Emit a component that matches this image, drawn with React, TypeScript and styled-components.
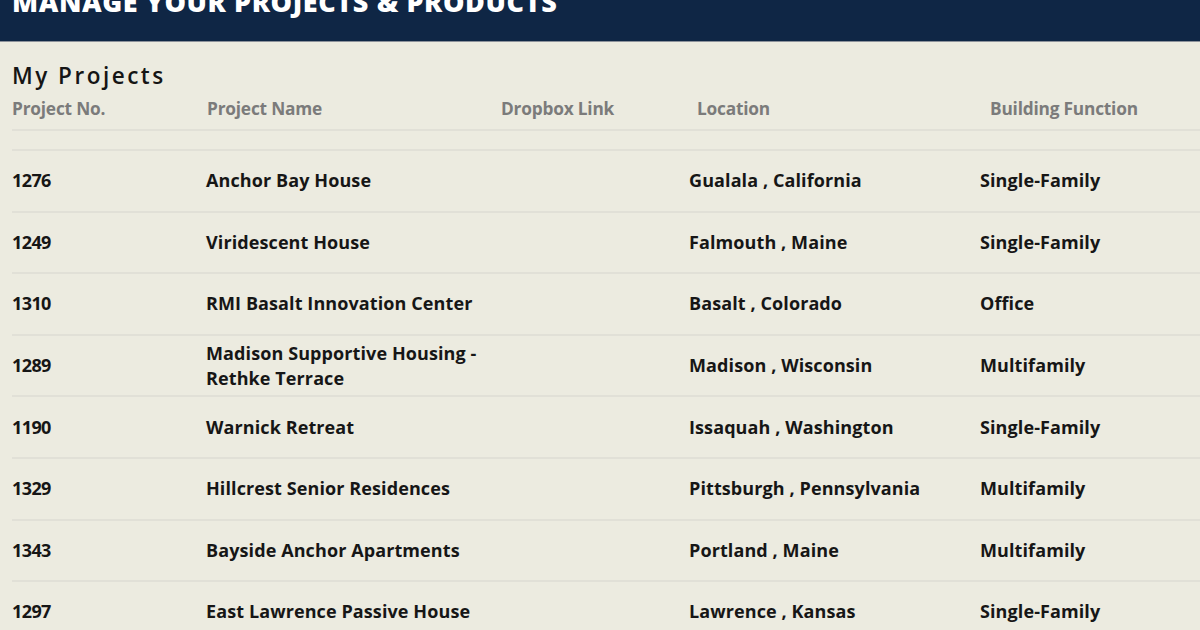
import React from "react";
import styled, { createGlobalStyle } from "styled-components";

const Global = createGlobalStyle`
  html, body { margin: 0; padding: 0; background: #ecebe0; }
  body { font-family: "Open Sans", Lato, sans-serif; overflow: hidden; }
`;

const TopBar = styled.header`
  height: 41px;
  background: #0f2645;
  border-bottom: 1px solid #8d929b;
  overflow: hidden;
  padding-left: 12px;
`;

const TopTitle = styled.h1`
  margin: -12px 0 0;
  font-family: "Open Sans", sans-serif;
  font-weight: 800;
  font-size: 27px;
  line-height: 28px;
  letter-spacing: 0.6px;
  color: #ffffff;
  white-space: nowrap;
`;

const Content = styled.main`
  padding-left: 12px;
`;

const SectionTitle = styled.h2`
  margin: 0;
  padding-top: 20px;
  font-family: "Open Sans", sans-serif;
  font-weight: 600;
  font-size: 22.5px;
  line-height: 28px;
  letter-spacing: 2.5px;
  color: #151515;
`;

const HeadRow = styled.div`
  display: grid;
  grid-template-columns: 195px 294px 196px 293px 1fr;
  height: 31px;
  padding-top: 8px;
  border-bottom: 2px solid #e1e0d7;
`;

const HeadCell = styled.div`
  font-family: "Open Sans", sans-serif;
  font-weight: 700;
  font-size: 17.3px;
  line-height: 22px;
  letter-spacing: -0.2px;
  color: #7b7b7b;
  white-space: nowrap;
`;

const Spacer = styled.div`
  height: 18px;
  border-bottom: 2px solid #e1e0d7;
`;

const Row = styled.div`
  display: grid;
  grid-template-columns: 194px 483px 291px 1fr;
  align-items: center;
  height: 59.6px;
  border-bottom: 2px solid #e1e0d7;
`;

const Cell = styled.div`
  font-family: "Open Sans", sans-serif;
  font-weight: 700;
  font-size: 18px;
  line-height: 25px;
  letter-spacing: 0.1px;
  color: #161616;
  white-space: nowrap;
`;

const NumberCell = styled(Cell)`
  letter-spacing: -0.6px;
`;

const NameCell = styled(Cell)`
  white-space: normal;
  max-width: 290px;
`;

const projects = [
  ["1276", "Anchor Bay House", "Gualala , California", "Single-Family"],
  ["1249", "Viridescent House", "Falmouth , Maine", "Single-Family"],
  ["1310", "RMI Basalt Innovation Center", "Basalt , Colorado", "Office"],
  ["1289", "Madison Supportive Housing - Rethke Terrace", "Madison , Wisconsin", "Multifamily"],
  ["1190", "Warnick Retreat", "Issaquah , Washington", "Single-Family"],
  ["1329", "Hillcrest Senior Residences", "Pittsburgh , Pennsylvania", "Multifamily"],
  ["1343", "Bayside Anchor Apartments", "Portland , Maine", "Multifamily"],
  ["1297", "East Lawrence Passive House", "Lawrence , Kansas", "Single-Family"],
];

export default function App() {
  return (
    <>
      <Global />
      <TopBar>
        <TopTitle>MANAGE YOUR PROJECTS &amp; PRODUCTS</TopTitle>
      </TopBar>
      <Content>
        <SectionTitle>My Projects</SectionTitle>
        <HeadRow>
          <HeadCell>Project No.</HeadCell>
          <HeadCell>Project Name</HeadCell>
          <HeadCell>Dropbox Link</HeadCell>
          <HeadCell>Location</HeadCell>
          <HeadCell>Building Function</HeadCell>
        </HeadRow>
        <Spacer />
        {projects.map(([no, name, loc, fn]) => (
          <Row key={no}>
            <NumberCell>{no}</NumberCell>
            <NameCell>{name}</NameCell>
            <Cell>{loc}</Cell>
            <Cell>{fn}</Cell>
          </Row>
        ))}
      </Content>
    </>
  );
}
